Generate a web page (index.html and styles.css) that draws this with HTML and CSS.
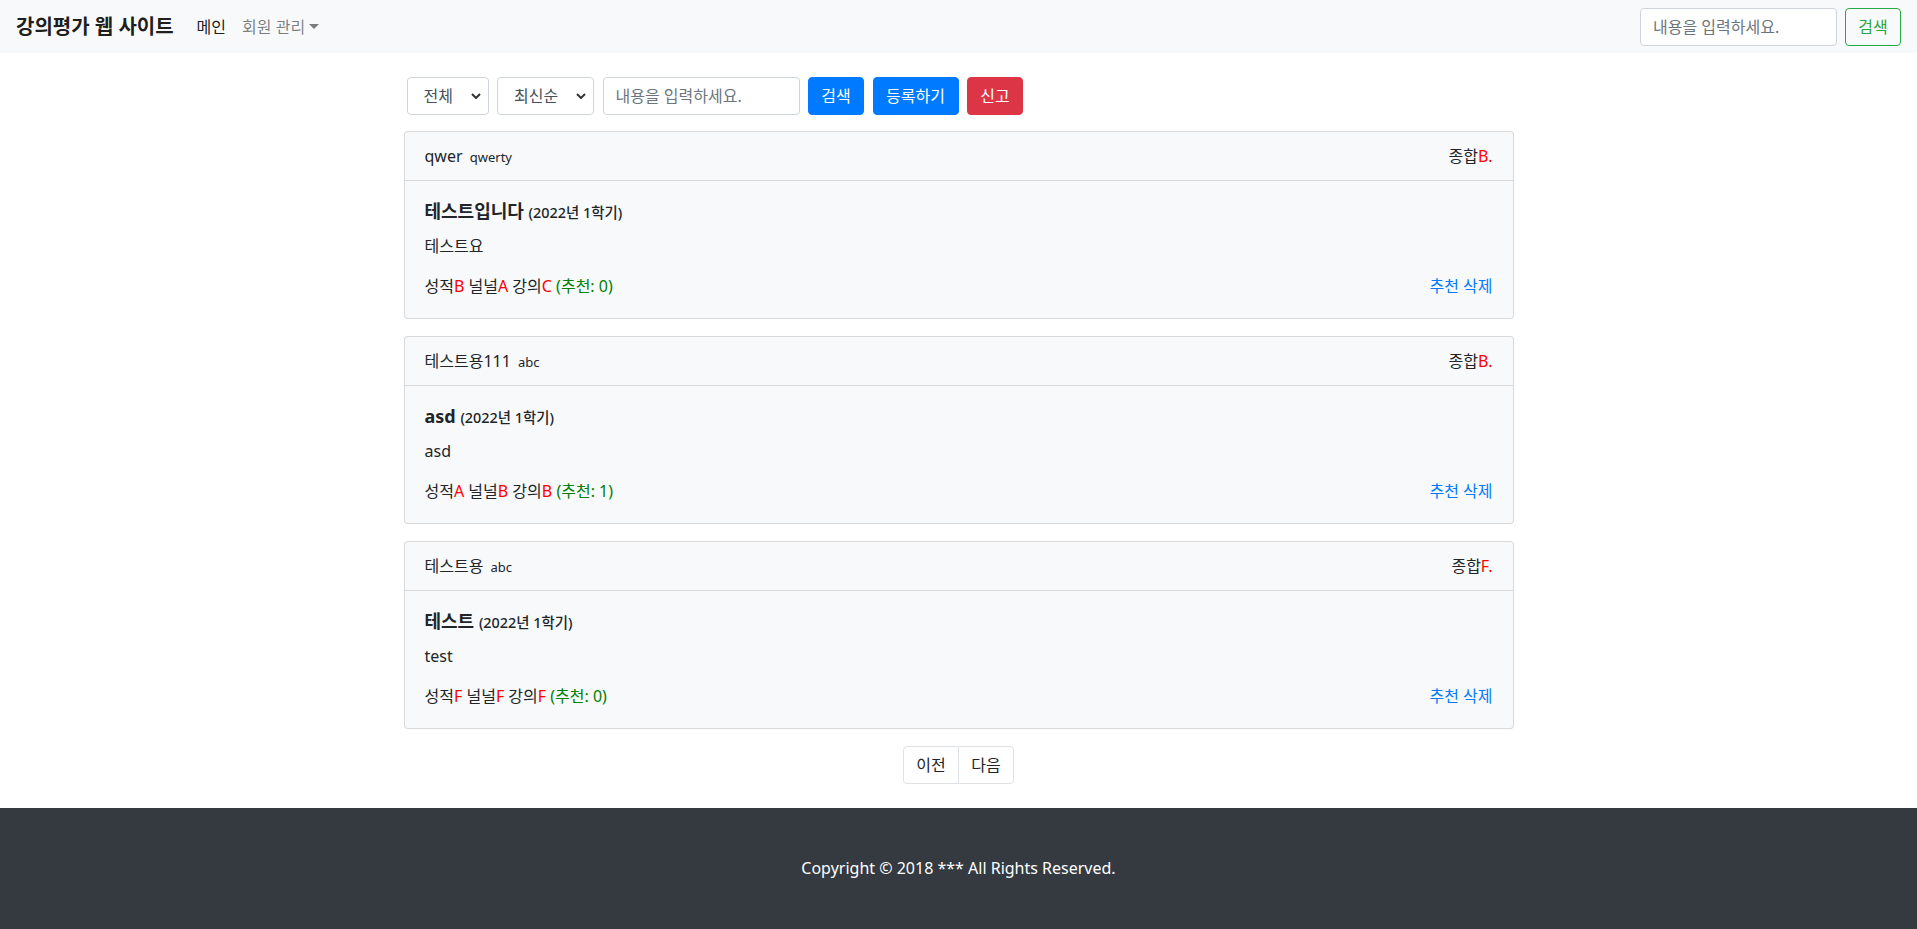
FILE: index.html
```html
<!DOCTYPE html>
<html lang="ko">
<head>
<meta charset="utf-8">
<title>강의평가 웹 사이트</title>
<link rel="stylesheet" href="styles.css">
</head>
<body>
<nav class="navbar">
  <a class="brand" href="#">강의평가 웹 사이트</a>
  <ul class="nav-links">
    <li><a class="nav-link active" href="#">메인</a></li>
    <li><a class="nav-link muted" href="#">회원 관리<span class="caret"></span></a></li>
  </ul>
  <form class="nav-search">
    <input class="input nav-input" type="text" placeholder="내용을 입력하세요.">
    <button class="btn btn-outline-success" type="button">검색</button>
  </form>
</nav>

<main class="container">
  <form class="toolbar">
    <div class="select select-sm"><span>전체</span><svg class="chev" viewBox="0 0 10 6" width="10" height="6"><path d="M1 1l4 4 4-4" fill="none" stroke="#333" stroke-width="2"/></svg></div>
    <div class="select select-md"><span>최신순</span><svg class="chev" viewBox="0 0 10 6" width="10" height="6"><path d="M1 1l4 4 4-4" fill="none" stroke="#333" stroke-width="2"/></svg></div>
    <input class="input tool-input" type="text" placeholder="내용을 입력하세요.">
    <button class="btn btn-primary btn-w56" type="button">검색</button>
    <button class="btn btn-primary btn-w86" type="button">등록하기</button>
    <button class="btn btn-danger btn-w56" type="button">신고</button>
  </form>

  <div class="card">
    <div class="card-header">
      <div>qwer <small class="sub">qwerty</small></div>
      <div>종합<span class="red">B.</span></div>
    </div>
    <div class="card-body">
      <h5 class="card-title">테스트입니다 <small>(2022년 1학기)</small></h5>
      <p class="card-text">테스트요</p>
      <div class="card-row">
        <div>성적<span class="red">B</span> 널널<span class="red">A</span> 강의<span class="red">C</span> <span class="green">(추천: 0)</span></div>
        <div><a class="link" href="#">추천</a> <a class="link" href="#">삭제</a></div>
      </div>
    </div>
  </div>

  <div class="card">
    <div class="card-header">
      <div>테스트용111 <small class="sub">abc</small></div>
      <div>종합<span class="red">B.</span></div>
    </div>
    <div class="card-body">
      <h5 class="card-title">asd <small>(2022년 1학기)</small></h5>
      <p class="card-text">asd</p>
      <div class="card-row">
        <div>성적<span class="red">A</span> 널널<span class="red">B</span> 강의<span class="red">B</span> <span class="green">(추천: 1)</span></div>
        <div><a class="link" href="#">추천</a> <a class="link" href="#">삭제</a></div>
      </div>
    </div>
  </div>

  <div class="card">
    <div class="card-header">
      <div>테스트용 <small class="sub">abc</small></div>
      <div>종합<span class="red">F.</span></div>
    </div>
    <div class="card-body">
      <h5 class="card-title">테스트 <small>(2022년 1학기)</small></h5>
      <p class="card-text">test</p>
      <div class="card-row">
        <div>성적<span class="red">F</span> 널널<span class="red">F</span> 강의<span class="red">F</span> <span class="green">(추천: 0)</span></div>
        <div><a class="link" href="#">추천</a> <a class="link" href="#">삭제</a></div>
      </div>
    </div>
  </div>

  <ul class="pagination">
    <li><a class="page-link" href="#">이전</a></li>
    <li><a class="page-link" href="#">다음</a></li>
  </ul>
</main>

<footer class="footer">Copyright © 2018 *** All Rights Reserved.</footer>
</body>
</html>
```

FILE: styles.css
```css
* { box-sizing: border-box; }
html, body { margin: 0; padding: 0; }
body {
  font-family: "Noto Sans", "Noto Sans CJK KR", sans-serif;
  font-size: 16px;
  line-height: 24px;
  color: #212529;
  background: #fff;
}
a { text-decoration: none; }

/* navbar */
.navbar {
  height: 53px;
  background: #f8f9fa;
  display: flex;
  align-items: center;
  padding: 0 16px;
}
.brand {
  font-size: 20px;
  line-height: 30px;
  font-weight: 700;
  color: rgba(0,0,0,.9);
  margin-right: 15px;
}
.nav-links {
  list-style: none;
  margin: 0;
  padding: 0;
  display: flex;
}
.nav-link {
  display: inline-flex;
  align-items: center;
  padding: 0 8px;
}
.nav-link.active { color: rgba(0,0,0,.9); }
.nav-link.muted { color: rgba(0,0,0,.5); }
.caret {
  display: inline-block;
  margin-left: 4px;
  width: 0;
  height: 0;
  border-top: 5px solid rgba(0,0,0,.5);
  border-left: 5px solid transparent;
  border-right: 5px solid transparent;
}
.nav-search {
  margin-left: auto;
  display: flex;
  gap: 8px;
}

/* inputs & buttons */
.input {
  height: 38px;
  border: 1px solid #ced4da;
  border-radius: 4px;
  padding: 0 12px;
  font: inherit;
  color: #495057;
  background: #fff;
}
.input::placeholder { color: #6c757d; }
.nav-input { width: 197px; }
.tool-input { width: 197px; }
.btn {
  height: 38px;
  border: 1px solid transparent;
  border-radius: 4px;
  font: inherit;
  padding: 0 12px;
  cursor: pointer;
}
.btn-outline-success {
  background: transparent;
  color: #28a745;
  border-color: #28a745;
  width: 56px;
  padding: 0;
}
.btn-primary { background: #007bff; border-color: #007bff; color: #fff; }
.btn-danger { background: #dc3545; border-color: #dc3545; color: #fff; }
.btn-w56 { width: 56px; padding: 0; }
.btn-w86 { width: 86px; padding: 0; }

/* content */
.container {
  max-width: 1140px;
  margin: 0 auto;
  padding: 24px 15px 0;
}
.toolbar {
  display: flex;
  gap: 8.5px;
  padding-left: 3px;
  margin: 0 0 16px;
}
.select {
  height: 38px;
  border: 1px solid #ced4da;
  border-radius: 4px;
  background: #fff;
  display: flex;
  align-items: center;
  justify-content: space-between;
  padding: 0 7px 0 16px;
  color: #495057;
}
.select-sm { width: 82px; }
.select-md { width: 97px; }
.chev { display: block; }

.card {
  background: #f8f9fa;
  border: 1px solid rgba(0,0,0,.125);
  border-radius: 4px;
  margin-bottom: 17px;
}
.card-header {
  display: flex;
  justify-content: space-between;
  padding: 12px 20px;
  border-bottom: 1px solid rgba(0,0,0,.125);
}
.sub { font-size: 13px; line-height: 0; margin-left: 3px; }
.card-body { padding: 20px; }
.card-title {
  margin: 0 0 13px;
  font-size: 18px;
  line-height: 20px;
  font-weight: 700;
}
.card-title small { font-size: 14.4px; line-height: 0; font-weight: 500; }
.card-text { margin: 0 0 16px; }
.card-row {
  display: flex;
  justify-content: space-between;
}
.red { color: #ff0000; }
.green { color: #008000; }
.link { color: #007bff; }

.pagination {
  list-style: none;
  margin: 0;
  padding: 0;
  display: flex;
  justify-content: center;
}
.pagination li + li .page-link { margin-left: -1px; }
.page-link {
  display: block;
  width: 56px;
  height: 38px;
  line-height: 36px;
  text-align: center;
  border: 1px solid #dee2e6;
  color: #212529;
  background: #fff;
}
.pagination li:first-child .page-link { border-radius: 4px 0 0 4px; }
.pagination li:last-child .page-link { border-radius: 0 4px 4px 0; }

.footer {
  margin-top: 24px;
  background: #343a40;
  color: #fff;
  text-align: center;
  padding: 48px 0 60px;
}
```
